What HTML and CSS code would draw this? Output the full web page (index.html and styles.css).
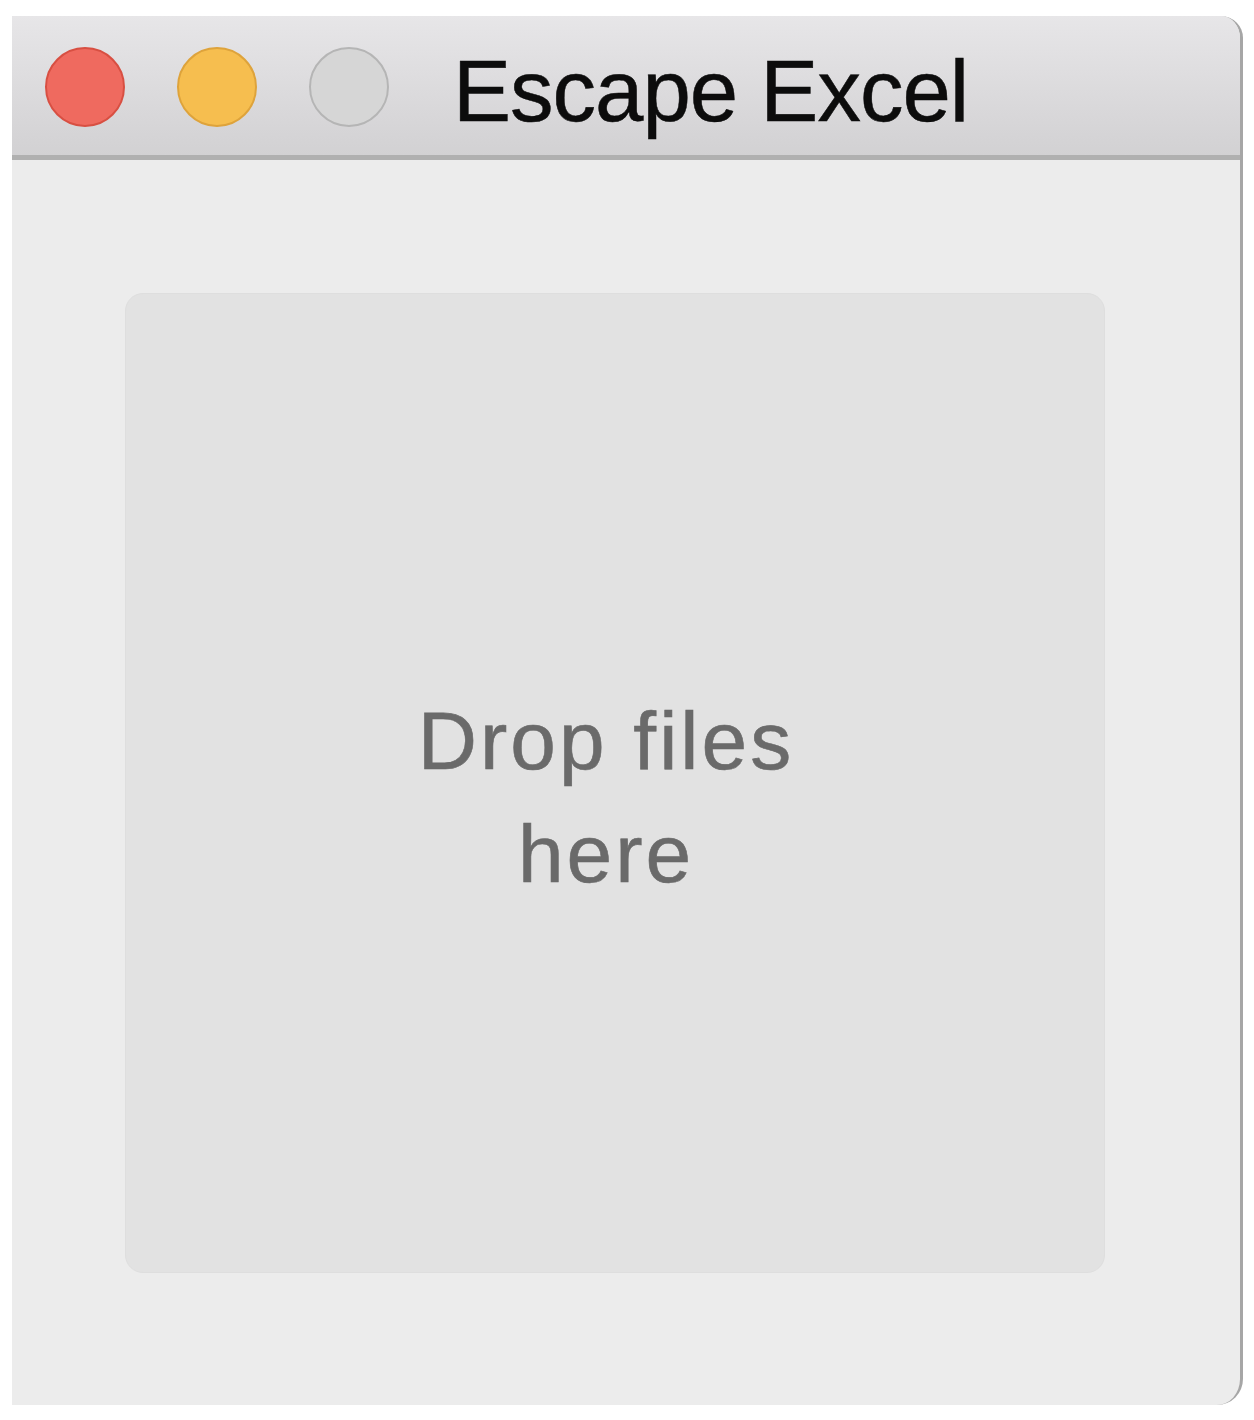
FILE: index.html
```html
<!DOCTYPE html>
<html lang="en">
<head>
    <meta charset="UTF-8">
    <meta name="viewport" content="width=device-width, initial-scale=1.0">
    <title>Escape Excel</title>
    <link rel="stylesheet" href="styles.css">
</head>
<body>
    <div class="window">
        <div class="title-bar">
            <div class="lights">
                <span class="light close"></span>
                <span class="light minimize"></span>
                <span class="light zoom"></span>
            </div>
            <h1 class="title">Escape Excel</h1>
        </div>

        <div class="content">
            <div class="drop-zone" id="drop-zone">
                <p class="drop-text">Drop files<br>here</p>
            </div>
        </div>
    </div>
</body>
</html>
```

FILE: styles.css
```css
body {
    margin: 0;
    padding: 0;
    background: #ffffff;
    font-family: "Liberation Sans", Arial, sans-serif;
}

.window {
    margin: 16px 0 0 12px;
    width: 1228px;
    height: 1389px;
    display: flex;
    flex-direction: column;
    background-color: #ececec;
    border-right: 3px solid #a6a6a6;
    border-top-right-radius: 22px;
    border-bottom-right-radius: 26px;
    overflow: hidden;
}

.title-bar {
    height: 139px;
    flex-shrink: 0;
    display: flex;
    align-items: center;
    padding-left: 33px;
    background: linear-gradient(#e7e6e8, #d2d1d3);
    border-bottom: 5px solid #b0b0b0;
}

.lights {
    display: flex;
    gap: 52px;
    margin-top: 3px;
}

.light {
    width: 76px;
    height: 76px;
    border-radius: 50%;
    border: 2px solid;
}

.close {
    background-color: #ef6a5f;
    border-color: #d84f42;
}

.minimize {
    background-color: #f6be4f;
    border-color: #dea33b;
}

.zoom {
    background-color: #d6d6d6;
    border-color: #b5b5b5;
}

.title {
    margin: 9px 0 0 64px;
    font-size: 87px;
    font-weight: normal;
    letter-spacing: -1px;
    color: #0c0c0c;
    line-height: 1;
    -webkit-text-stroke: 0.5px #0c0c0c;
}

.content {
    flex: 1;
    padding: 133px 135px 132px 113px;
}

.drop-zone {
    width: 980px;
    height: 980px;
    box-sizing: border-box;
    display: flex;
    align-items: center;
    justify-content: center;
    background-color: #e2e2e2;
    border: 1px solid #dedede;
    border-radius: 18px;
}

.drop-text {
    margin: 0;
    padding: 28px 18px 0 0;
    text-align: center;
    font-size: 82px;
    line-height: 113px;
    letter-spacing: 3px;
    color: #6a6a6a;
    -webkit-text-stroke: 0.6px #6a6a6a;
}
```
